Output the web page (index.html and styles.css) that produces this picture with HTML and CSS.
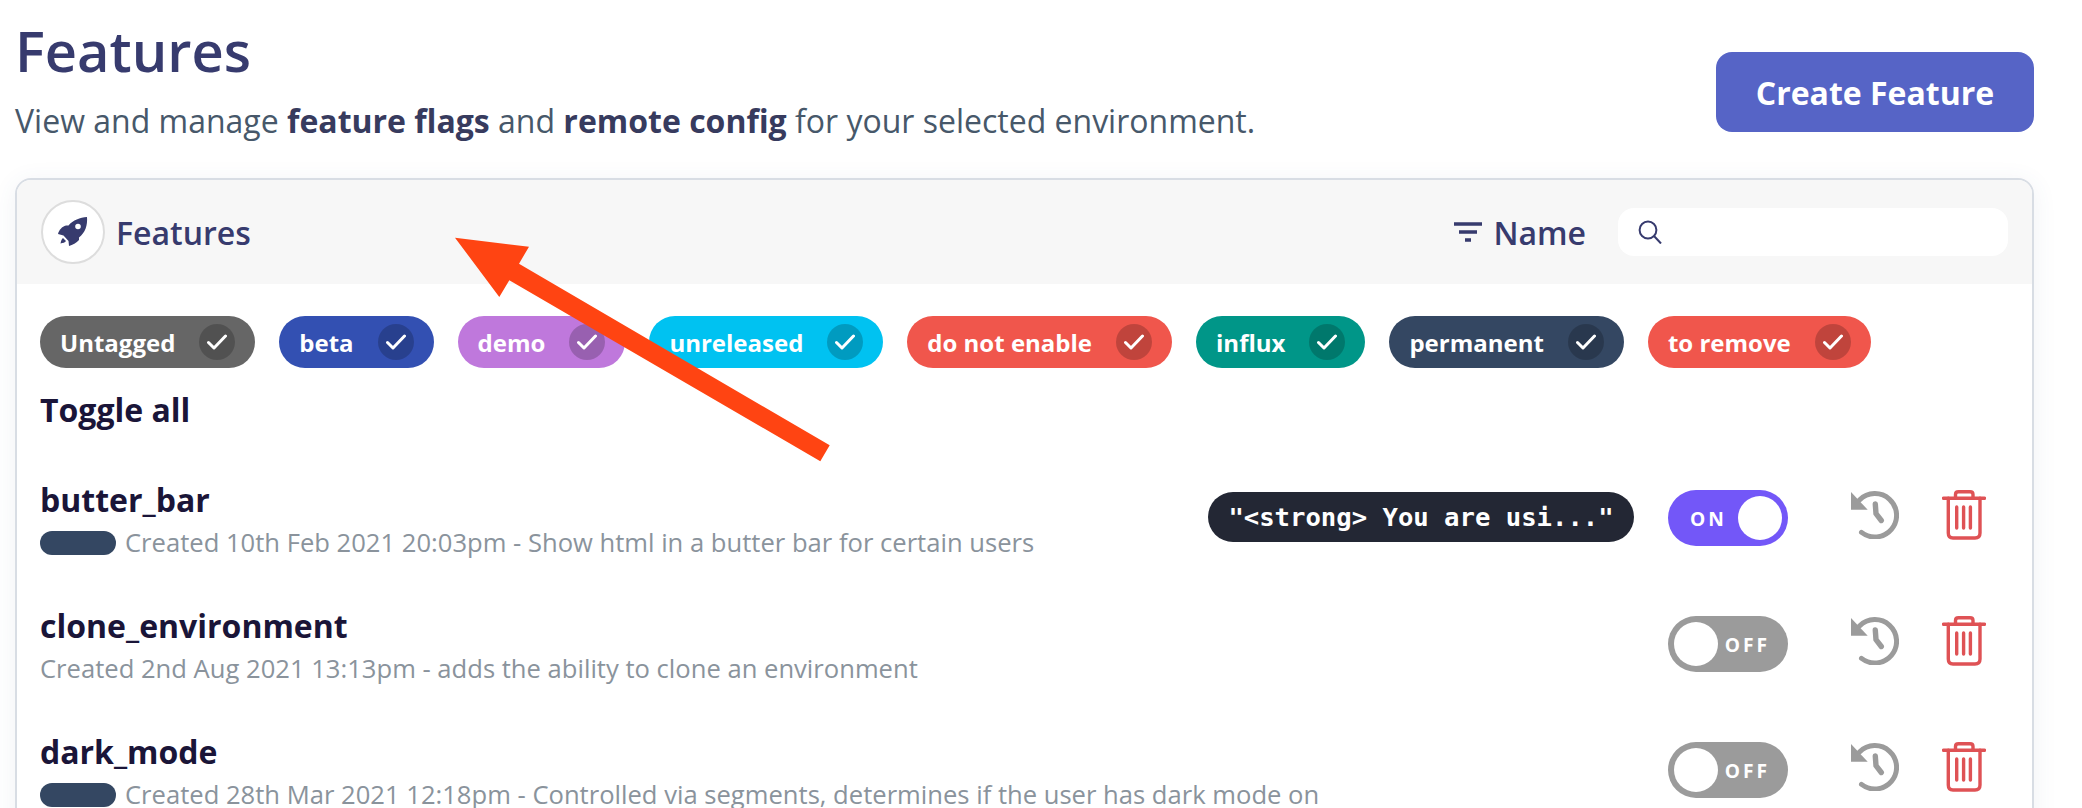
FILE: index.html
```html
<!DOCTYPE html>
<html lang="en">
<head>
<meta charset="utf-8">
<title>Features</title>
<link rel="stylesheet" href="styles.css">
</head>
<body>
<svg width="0" height="0" class="defs">
  <symbol id="check" viewBox="0 0 20 16"><path d="M1.5 8.5 L7 14 L18.5 2" fill="none" stroke="#fff" stroke-width="3" stroke-linecap="round" stroke-linejoin="round"/></symbol>
  <symbol id="history" viewBox="0 0 48 48">
    <path d="M10.5 41.4 A21.7 21.7 0 1 0 8.5 9" fill="none" stroke="#9b9b9b" stroke-width="5" stroke-linecap="round"/>
    <path d="M0 1 L0 18.7 L16.7 18.7 Z" fill="#9b9b9b"/>
    <path d="M24.3 13 L25 22.7 L30.3 29.5" fill="none" stroke="#9b9b9b" stroke-width="5.4" stroke-linecap="round" stroke-linejoin="round"/>
  </symbol>
  <symbol id="trash" viewBox="0 0 44 50">
    <g fill="none" stroke="#df5255" stroke-width="3.4" stroke-linecap="round" stroke-linejoin="round">
      <path d="M1.5 8.3 H42.5"/>
      <path d="M13.5 8 V4.5 Q13.5 1.8 16.5 1.8 H28 Q31 1.8 31 4.5 V8"/>
      <path d="M6.3 8.3 V43 Q6.3 48 11 48 H33 Q38 48 38 43 V8.3"/>
      <path d="M14.7 17 V38 M21.6 17 V38 M28.4 17 V38"/>
    </g>
  </symbol>
</svg>

<header class="page-head">
  <div>
    <h1 class="title">Features</h1>
    <p class="lead">View and manage <strong>feature flags</strong> and <strong>remote config</strong> for your selected environment.</p>
  </div>
  <button class="create">Create Feature</button>
</header>

<section class="card">
  <div class="card-head">
    <span class="rocket">
      <svg width="30" height="30" viewBox="0 0 30 30"><path fill-rule="evenodd" fill="#373b6e" d="M29 0 C29.6 8 27.5 15.5 21 20.5 L21 23 C18.5 26 14.5 28 11 29 L10.5 24 L5.5 18.5 L0 17 C1 13 4 9.5 8 8.5 L10.5 8.5 C15 3 22 .5 29 0 Z M20 6.7 A2.8 2.8 0 1 0 20 12.3 A2.8 2.8 0 1 0 20 6.7 Z M5 21 L8 24 C7 25.5 5 26 2.5 26.5 C3 24 3.5 22 5 21 Z"/></svg>
    </span>
    <span class="card-title">Features</span>
    <span class="sort">
      <svg width="28" height="20" viewBox="0 0 28 20"><path d="M0 2 H28 M5 10 H23 M11 18 H17" stroke="#373b6e" stroke-width="3.4"/></svg>
      Name
    </span>
    <div class="search">
      <svg width="24" height="24" viewBox="0 0 24 24"><circle cx="10" cy="10" r="8.4" fill="none" stroke="#373b6e" stroke-width="2"/><path d="M16 16 L23 23.5" stroke="#373b6e" stroke-width="2"/></svg>
    </div>
  </div>

  <div class="card-body">
    <div class="chips">
      <span class="chip c-grey">Untagged<i><svg width="20" height="16"><use href="#check"/></svg></i></span>
      <span class="chip c-blue">beta<i><svg width="20" height="16"><use href="#check"/></svg></i></span>
      <span class="chip c-purple">demo<i><svg width="20" height="16"><use href="#check"/></svg></i></span>
      <span class="chip c-cyan">unreleased<i><svg width="20" height="16"><use href="#check"/></svg></i></span>
      <span class="chip c-red">do not enable<i><svg width="20" height="16"><use href="#check"/></svg></i></span>
      <span class="chip c-teal">influx<i><svg width="20" height="16"><use href="#check"/></svg></i></span>
      <span class="chip c-navy">permanent<i><svg width="20" height="16"><use href="#check"/></svg></i></span>
      <span class="chip c-red">to remove<i><svg width="20" height="16"><use href="#check"/></svg></i></span>
    </div>
    <div class="toggle-all">Toggle all</div>

    <div class="row">
      <div class="info">
        <div class="name">butter_bar</div>
        <div class="desc"><span class="tag"></span>Created 10th Feb 2021 20:03pm - Show html in a butter bar for certain users</div>
      </div>
      <code class="value">"&lt;strong&gt; You are usi..."</code>
      <span class="switch on"><b>ON</b><i></i></span>
      <svg class="hist" width="48" height="48"><use href="#history"/></svg>
      <svg class="bin" width="44" height="50"><use href="#trash"/></svg>
    </div>

    <div class="row">
      <div class="info">
        <div class="name">clone_environment</div>
        <div class="desc">Created 2nd Aug 2021 13:13pm - adds the ability to clone an environment</div>
      </div>
      <span class="switch off"><i></i><b>OFF</b></span>
      <svg class="hist" width="48" height="48"><use href="#history"/></svg>
      <svg class="bin" width="44" height="50"><use href="#trash"/></svg>
    </div>

    <div class="row">
      <div class="info">
        <div class="name">dark_mode</div>
        <div class="desc"><span class="tag"></span>Created 28th Mar 2021 12:18pm - Controlled via segments, determines if the user has dark mode on</div>
      </div>
      <span class="switch off"><i></i><b>OFF</b></span>
      <svg class="hist" width="48" height="48"><use href="#history"/></svg>
      <svg class="bin" width="44" height="50"><use href="#trash"/></svg>
    </div>
  </div>
</section>

<svg class="arrow" width="2082" height="808" viewBox="0 0 2082 808"><polygon fill="#ff4412" points="455,237.7 529,246.7 519,263.7 829.7,445.3 820.3,461.3 509.3,280.3 499.3,297"/></svg>
</body>
</html>
```

FILE: styles.css
```css
* { box-sizing: border-box; }
html, body { margin: 0; height: 808px; overflow: hidden; background: #fff; }
body { font-family: "Open Sans", sans-serif; position: relative; padding: 0 48px 0 15px; }
.defs { position: absolute; }

.page-head { display: flex; justify-content: space-between; align-items: flex-start; height: 178px; padding-top: 14px; }
.title { margin: 0; font-size: 56px; line-height: 72px; font-weight: 600; color: #373b6e; }
.lead { margin: 13px 0 0; font-size: 32px; line-height: 44px; color: #47586a; }
.lead strong { font-weight: 700; color: #373b5e; }
.create { margin-top: 38px; width: 318px; height: 80px; border: 0; border-radius: 16px; background: #5664c6; color: #fff; font: 700 32px "Open Sans", sans-serif; }

.card { height: 700px; border: 2px solid #d8dde4; border-radius: 16px; box-shadow: 0 4px 24px rgba(70,90,130,.08); overflow: hidden; background: #fff; }
.card-head { display: flex; align-items: center; height: 104px; padding: 0 24px; background: #f7f7f7; }
.rocket { display: flex; align-items: center; justify-content: center; width: 64px; height: 64px; border: 2px solid #ddd; border-radius: 50%; background: #fff; }
.card-title { margin-left: 11px; font-size: 32px; font-weight: 600; color: #373b6e; }
.sort { display: flex; align-items: center; gap: 11px; margin-left: auto; margin-right: 32px; font-size: 32px; font-weight: 600; color: #373b6e; }
.search { display: flex; align-items: center; width: 390px; height: 48px; padding-left: 20px; border-radius: 16px; background: #fff; }

.card-body { padding: 32px 24px 0 23px; }
.chips { display: flex; gap: 24px; }
.chip { display: flex; align-items: center; justify-content: space-between; height: 52px; padding: 0 20px; border-radius: 26px; color: #fff; font-size: 24px; font-weight: 700; }
.chip i { display: flex; align-items: center; justify-content: center; width: 36px; height: 36px; margin-left: 24px; border-radius: 50%; background: rgba(0,0,0,.2); }
.c-grey { background: #666; }
.c-blue { background: #3350b2; }
.c-purple { background: #bf78dc; }
.c-cyan { background: #00c2f1; }
.c-red { background: #f0564c; }
.c-teal { background: #009688; }
.c-navy { background: #344762; }

.toggle-all { margin-top: 20px; margin-bottom: 23px; font-size: 32px; line-height: 44px; font-weight: 700; color: #1a1538; }

.row { display: flex; align-items: center; height: 126px; }
.info { flex: 1; min-width: 0; padding-top: 3px; }
.name { font-size: 32px; line-height: 40px; font-weight: 700; color: #1a1538; }
.desc { display: flex; align-items: center; margin-top: 7px; font-size: 25.6px; line-height: 32px; color: #8a939c; white-space: nowrap; }
.tag { width: 76px; height: 24px; margin-right: 9px; border-radius: 12px; background: #344762; }
.value { width: 426px; height: 50px; margin-right: 34px; margin-bottom: 2px; border-radius: 25px; background: #232734; color: #fff; text-align: center; font: 700 25.6px/50px "DejaVu Sans Mono", monospace; }
.switch { display: flex; align-items: center; justify-content: space-between; width: 120px; height: 56px; padding: 0 6px; border-radius: 28px; color: #fff; }
.switch b { font-size: 19.2px; font-weight: 700; letter-spacing: 3px; }
.switch i { width: 44px; height: 44px; border-radius: 50%; background: #fff; }
.switch.on { background: #7357f8; }
.switch.on b { padding-left: 16px; }
.switch.off { background: #9b9b9b; }
.switch.off b { padding-right: 12px; }
.hist { margin-left: 63px; margin-bottom: 6px; }
.bin { margin-left: 43px; margin-right: 22px; margin-bottom: 6px; }

.arrow { position: absolute; left: 0; top: 0; pointer-events: none; }
```
